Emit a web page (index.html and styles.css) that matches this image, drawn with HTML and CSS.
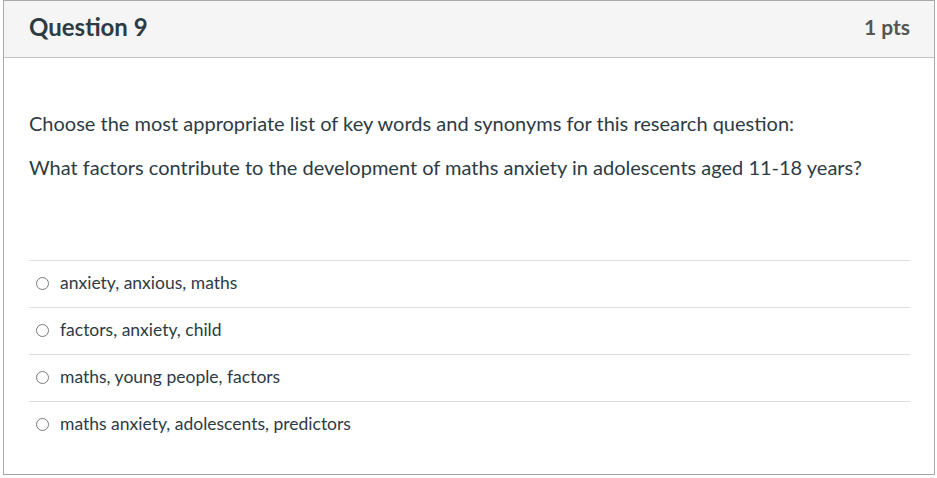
FILE: index.html
```html
<!DOCTYPE html>
<html>
<head>
<meta charset="utf-8" />
<title>Question 9</title>
<link rel="stylesheet" href="styles.css">
</head>
<body>
	<div class="question">
		<div class="header">
			<span class="name">Question 9</span>
			<span class="points">1 pts</span>
		</div>
		<div class="content">
			<div class="text">
				<p>Choose the most appropriate list of key words and synonyms for this research question:</p>
				<p>What factors contribute to the development of maths anxiety in adolescents aged 11-18 years?</p>
			</div>
			<ul class="answers">
				<li><span class="radio"></span>anxiety, anxious, maths</li>
				<li><span class="radio"></span>factors, anxiety, child</li>
				<li><span class="radio"></span>maths, young people, factors</li>
				<li><span class="radio"></span>maths anxiety, adolescents, predictors</li>
			</ul>
		</div>
	</div>
</body>
</html>
```
FILE: styles.css
```css
body, div, p, ul {padding:0; margin:0;}
li {list-style:none;}
body {background:#fff; font-family:Lato, "Noto Sans", sans-serif; color:#2d3b45;}

.question {width:932px; height:475px; margin-left:3px; border:1px solid #a9a9a9; box-sizing:border-box;}
.header {height:57px; background:#f5f5f5; border-bottom:1px solid #c2c2c2; display:flex; align-items:center; justify-content:space-between; padding:0 24px 5px 25px; box-sizing:border-box;}
.header .name {font-size:24px; font-weight:bold; color:#2d3b45;}
.header .points {font-size:21px; font-weight:bold; color:#555;}

.content {padding:0 24px 0 25px;}
.text {padding-top:53px; height:202px; box-sizing:border-box;}
.text p {font-size:20px; line-height:24px; margin-bottom:20px;}

.answers li {height:47px; border-top:1px solid #ddd; display:flex; align-items:center; padding-bottom:4px; font-size:17.5px; box-sizing:border-box;}
.radio {width:13px; height:13px; border:1px solid #7a7a7a; border-radius:50%; margin:3px 11px 0 7px; box-sizing:border-box;}
```
